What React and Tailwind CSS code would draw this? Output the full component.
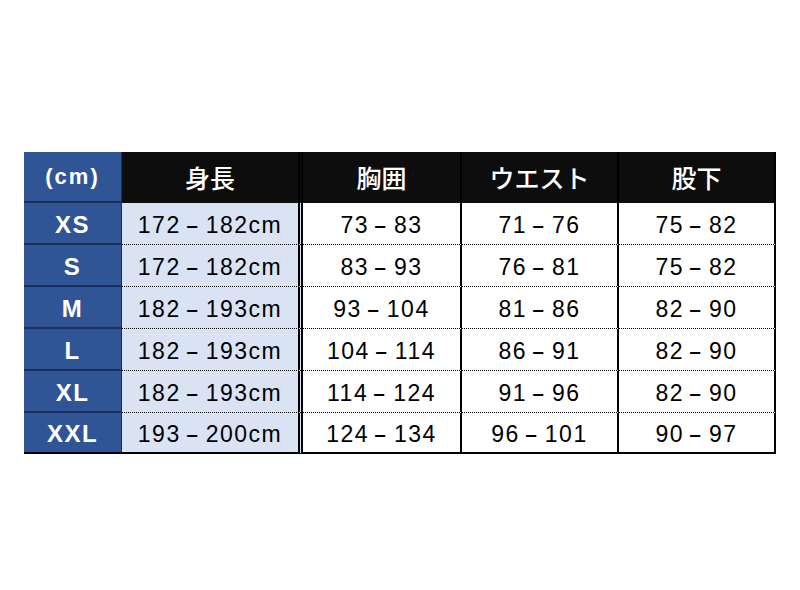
const rows = [
  ['XS', '172 - 182cm', '73 - 83', '71 - 76', '75 - 82'],
  ['S', '172 - 182cm', '83 - 93', '76 - 81', '75 - 82'],
  ['M', '182 - 193cm', '93 - 104', '81 - 86', '82 - 90'],
  ['L', '182 - 193cm', '104 - 114', '86 - 91', '82 - 90'],
  ['XL', '182 - 193cm', '114 - 124', '91 - 96', '82 - 90'],
  ['XXL', '193 - 200cm', '124 - 134', '96 - 101', '90 - 97'],
]

const jp = { fontFamily: '"Noto Sans CJK JP", "Noto Sans", sans-serif' }
const num = { fontFamily: '"Liberation Sans", Arial, sans-serif' }

// range text with a wider dash, like the half-width hyphen of the sheet
function Range({ text }) {
  const [a, b] = text.split(' - ')
  return (
    <span>
      {a} <span className="inline-block scale-x-[1.8]">-</span> {b}
    </span>
  )
}

export default function App() {
  return (
    <div className="w-[800px] h-[590px] bg-white pt-[152px] pl-[24px]">
      <div className="w-[752px]">
        {/* header */}
        <div className="flex h-[51px] text-white" style={jp}>
          <div className="w-[98px] bg-[#2f5597] border-r border-b-2 border-[#1b2e55] flex items-center justify-center text-[22px] font-bold tracking-[2px]" style={num}>
            (cm)
          </div>
          <div className="w-[181px] bg-[#0d0d0d] border-r-[5px] [border-right-style:double] border-r-black flex items-center justify-center text-[25px] font-medium">
            身長
          </div>
          <div className="w-[159px] bg-[#0d0d0d] border-r-2 border-black flex items-center justify-center text-[25px] font-medium">
            胸囲
          </div>
          <div className="w-[157px] bg-[#0d0d0d] border-r-2 border-black flex items-center justify-center text-[25px] font-medium">
            ウエスト
          </div>
          <div className="w-[157px] bg-[#0d0d0d] border-r-2 border-black flex items-center justify-center text-[25px] font-medium">
            股下
          </div>
        </div>

        {rows.map((r, i) => {
          const last = i === rows.length - 1
          const line = last ? 'border-b-2 border-b-black' : 'border-b [border-bottom-style:dotted] border-b-black'
          return (
            <div key={r[0]} className={`flex ${last ? 'h-[41px]' : 'h-[42px]'} text-black text-[23px] tracking-[1.5px]`} style={num}>
              <div className={`w-[98px] bg-[#2f5597] border-r ${last ? 'border-b-2 border-b-black' : 'border-b-2 border-b-[#1b2e55]'} border-r-[#1b2e55] flex items-center justify-center pt-[3px] text-white font-bold text-[24px] tracking-[1.5px]`}>
                {r[0]}
              </div>
              <div className={`w-[181px] bg-[#dae3f3] border-r-[5px] [border-right-style:double] border-r-black ${line} flex items-center justify-center pt-[4px]`}>
                <Range text={r[1]} />
              </div>
              <div className={`w-[159px] border-r-2 border-r-black ${line} flex items-center justify-center pt-[4px]`}>
                <Range text={r[2]} />
              </div>
              <div className={`w-[157px] border-r-2 border-r-black ${line} flex items-center justify-center pt-[4px]`}>
                <Range text={r[3]} />
              </div>
              <div className={`w-[157px] border-r-2 border-r-black ${line} flex items-center justify-center pt-[4px]`}>
                <Range text={r[4]} />
              </div>
            </div>
          )
        })}
      </div>
    </div>
  )
}
